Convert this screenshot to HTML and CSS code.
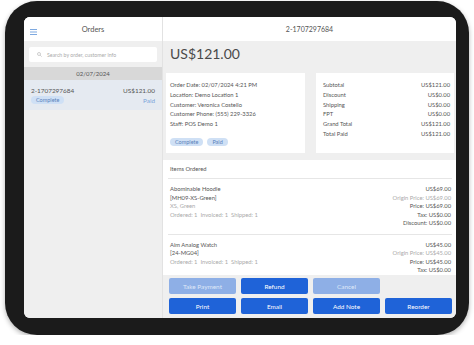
FILE: index.html
```html
<!DOCTYPE html>
<html>
<head>
<meta charset="utf-8">
<title>Orders</title>
<link rel="stylesheet" href="styles.css">
</head>
<body>
<div class="tablet">
    <div class="screen">
        <div class="sidebar">
            <div class="side-header">
                <svg class="menu-icon" width="7" height="6" viewBox="0 0 7 6">
                    <path d="M0 0.5H7M0 3H7M0 5.5H7" stroke="#6f9fdc" stroke-width="0.9"/>
                </svg>
                <span>Orders</span>
            </div>
            <div class="search-wrap">
                <div class="search">
                    <svg width="5" height="5" viewBox="0 0 10 10">
                        <circle cx="4" cy="4" r="3" fill="none" stroke="#b5b5b5" stroke-width="1.3"/>
                        <path d="M6.3 6.3L9.3 9.3" stroke="#b5b5b5" stroke-width="1.3"/>
                    </svg>
                    <span>Search by order, customer info</span>
                </div>
            </div>
            <div class="date-bar">02/07/2024</div>
            <div class="order-row">
                <div class="row-line">
                    <span>2-1707297684</span>
                    <span>US$121.00</span>
                </div>
                <div class="row-line">
                    <span class="badge">Complete</span>
                    <span class="paid">Paid</span>
                </div>
            </div>
        </div>

        <div class="detail">
            <div class="detail-header">2-1707297684</div>
            <div class="detail-body">
                <div class="amount">US$121.00</div>
                <div class="cards">
                    <div class="card info">
                        <div>Order Date: 02/07/2024 4:21 PM</div>
                        <div>Location: Demo Location 1</div>
                        <div>Customer: Veronica Costello</div>
                        <div>Customer Phone: (555) 229-3326</div>
                        <div>Staff: POS Demo 1</div>
                        <div class="badges">
                            <span class="badge">Complete</span>
                            <span class="badge">Paid</span>
                        </div>
                    </div>
                    <div class="card totals">
                        <div class="total-row"><span>Subtotal</span><span>US$121.00</span></div>
                        <div class="total-row"><span>Discount</span><span>US$0.00</span></div>
                        <div class="total-row"><span>Shipping</span><span>US$0.00</span></div>
                        <div class="total-row"><span>FPT</span><span>US$0.00</span></div>
                        <div class="total-row"><span>Grand Total</span><span>US$121.00</span></div>
                        <div class="total-row"><span>Total Paid</span><span>US$121.00</span></div>
                    </div>
                </div>
                <div class="items">
                    <div class="items-title">Items Ordered</div>
                    <div class="item">
                        <div>
                            <div>Abominable Hoodie</div>
                            <div>[MH09-XS-Green]</div>
                            <div class="muted">XS, Green</div>
                            <div class="muted">Ordered: 1 &nbsp;Invoiced: 1 &nbsp;Shipped: 1</div>
                        </div>
                        <div class="prices">
                            <div>US$69.00</div>
                            <div class="muted">Origin Price: US$69.00</div>
                            <div>Price: US$69.00</div>
                            <div>Tax: US$0.00</div>
                            <div>Discount: US$0.00</div>
                        </div>
                    </div>
                    <div class="item">
                        <div>
                            <div>Aim Analog Watch</div>
                            <div>[24-MG04]</div>
                            <div class="muted">Ordered: 1 &nbsp;Invoiced: 1 &nbsp;Shipped: 1</div>
                        </div>
                        <div class="prices">
                            <div>US$45.00</div>
                            <div class="muted">Origin Price: US$45.00</div>
                            <div>Price: US$45.00</div>
                            <div>Tax: US$0.00</div>
                        </div>
                    </div>
                </div>
            </div>
            <div class="actions">
                <button class="disabled">Take Payment</button>
                <button>Refund</button>
                <button class="disabled">Cancel</button>
                <span></span>
                <button>Print</button>
                <button>Email</button>
                <button>Add Note</button>
                <button>Reorder</button>
            </div>
        </div>
    </div>
</div>
</body>
</html>
```

FILE: styles.css
```css
body {
    margin: 0;
    background: #fff;
    font-family: Lato, "Noto Sans", sans-serif;
    color: #555;
}
.tablet {
    margin: 1px 0 0 5px;
    width: 464px;
    height: 334px;
    box-sizing: border-box;
    padding: 16px 13px 17px 19px;
    background: #1b1b1b;
    border-radius: 32px;
    box-shadow: 0 2px 5px rgba(0, 0, 0, 0.3);
}
.screen {
    display: flex;
    height: 301px;
    background: #f0f0f0;
    border-radius: 6px;
    overflow: hidden;
}
.sidebar {
    width: 138px;
    border-right: 1px solid #e2e2e2;
    background: #efefef;
}
.side-header {
    position: relative;
    height: 24px;
    background: #fff;
    display: flex;
    align-items: center;
    justify-content: center;
    font-size: 7.5px;
    color: #555;
}
.menu-icon {
    position: absolute;
    left: 6px;
    top: 12px;
}
.search-wrap {
    padding: 6px 5px 5px;
}
.search {
    height: 15px;
    background: #fff;
    border-radius: 2px;
    display: flex;
    align-items: center;
    gap: 5px;
    padding-left: 8px;
    font-size: 5.2px;
    color: #aaa;
}
.date-bar {
    height: 13px;
    line-height: 13px;
    text-align: center;
    background: #d8d8d8;
    font-size: 6px;
    color: #555;
}
.order-row {
    background: #e5eaf1;
    padding: 5px 7px;
    font-size: 6.4px;
    color: #555;
}
.row-line {
    display: flex;
    justify-content: space-between;
    align-items: center;
    height: 10px;
}
.badge {
    display: inline-block;
    background: #cfe0f5;
    color: #5a82bb;
    font-size: 5.5px;
    line-height: 8px;
    padding: 0 5px;
    border-radius: 4px;
}
.paid {
    color: #7aa4da;
}
.detail {
    flex: 1;
    display: flex;
    flex-direction: column;
    min-width: 0;
}
.detail-header {
    height: 24px;
    flex: none;
    background: #fff;
    display: flex;
    align-items: center;
    justify-content: center;
    font-size: 7px;
    color: #555;
}
.detail-body {
    flex: 1;
    overflow: hidden;
    background: #efefef;
}
.amount {
    padding: 4px 7px 0;
    font-size: 14px;
    line-height: 18px;
    color: #4a4a4a;
    margin-bottom: 10px;
}
.cards {
    display: grid;
    grid-template-columns: 139px 138px;
    gap: 11px;
    padding: 0 2px 0 3px;
    margin-bottom: 7px;
}
.card {
    background: #fff;
    height: 80px;
    box-sizing: border-box;
    font-size: 5.8px;
    line-height: 9.8px;
}
.info {
    padding: 7px 4px;
}
.badges {
    margin-top: 9px;
    display: flex;
    gap: 4px;
    line-height: 8px;
}
.totals {
    padding: 7px 4px 7px 7px;
}
.total-row {
    display: flex;
    justify-content: space-between;
}
.items {
    background: #fff;
    padding: 0 4px 0 5px;
    font-size: 5.8px;
    line-height: 8.5px;
}
.items-title {
    height: 18px;
    line-height: 18px;
    padding-left: 2px;
    border-bottom: 1px solid #e6e6e6;
}
.item {
    display: flex;
    justify-content: space-between;
    padding: 6px 1px 6px 2px;
    border-bottom: 1px solid #e6e6e6;
}
.prices {
    text-align: right;
}
.muted {
    color: #aaa;
}
.actions {
    flex: none;
    display: grid;
    grid-template-columns: repeat(4, 67px);
    grid-auto-rows: 16px;
    column-gap: 5px;
    row-gap: 4px;
    padding: 3px 4px 4px 6px;
    background: #efefef;
}
button {
    border: none;
    border-radius: 2px;
    background: #1f63d8;
    color: #fff;
    font-family: Lato, "Noto Sans", sans-serif;
    font-size: 6.4px;
    padding: 0;
}
button.disabled {
    background: #8eafe6;
    color: #dfe8f8;
}
```
